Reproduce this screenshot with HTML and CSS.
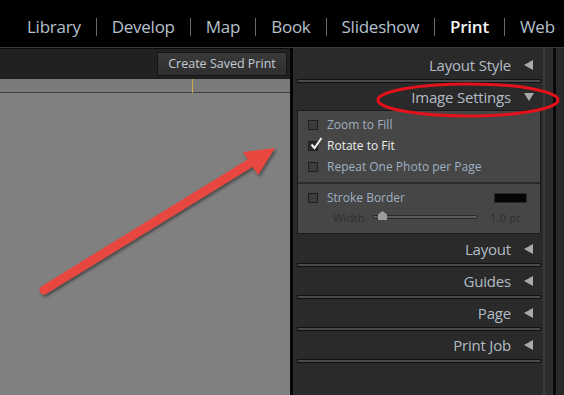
FILE: index.html
```html
<!DOCTYPE html>
<html>
<head>
<meta charset="utf-8">
<link rel="stylesheet" href="styles.css">
</head>
<body>
<div class="app">
  <header class="topbar">
    <nav class="modules">
      <span class="mod">Library</span><span class="sep"></span>
      <span class="mod">Develop</span><span class="sep"></span>
      <span class="mod">Map</span><span class="sep"></span>
      <span class="mod">Book</span><span class="sep"></span>
      <span class="mod">Slideshow</span><span class="sep"></span>
      <span class="mod active">Print</span><span class="sep"></span>
      <span class="mod">Web</span>
    </nav>
  </header>
  <main class="main">
    <section class="left">
      <div class="toolbar"><button class="btn">Create Saved Print</button></div>
      <div class="ruler"><span class="tick"></span></div>
      <div class="canvas"></div>
    </section>
    <div class="divider"></div>
    <aside class="panel">
      <div class="head"><span class="title">Layout Style</span><span class="tri-left"></span></div>
      <div class="bar"></div>
      <div class="head open"><span class="title">Image Settings</span><span class="tri-down"></span></div>
      <div class="box">
        <div class="row"><span class="cb"></span><span class="lbl">Zoom to Fill</span></div>
        <div class="row"><span class="cb checked"><svg class="check" width="13" height="13" viewBox="0 0 13 13"><path d="M1.5 7.5 L4.5 11 L11.5 1" fill="none" stroke="#f2f2f2" stroke-width="2"/></svg></span><span class="lbl on">Rotate to Fit</span></div>
        <div class="row"><span class="cb"></span><span class="lbl">Repeat One Photo per Page</span></div>
        <div class="hr"></div>
        <div class="row"><span class="cb"></span><span class="lbl">Stroke Border</span><span class="swatch"></span></div>
        <div class="row slider-row"><span class="dim wlabel">Width</span><span class="track"><span class="thumb"></span></span><span class="dim val">1.0 pt</span></div>
      </div>
      <div class="head"><span class="title">Layout</span><span class="tri-left"></span></div>
      <div class="bar"></div>
      <div class="head"><span class="title">Guides</span><span class="tri-left"></span></div>
      <div class="bar"></div>
      <div class="head"><span class="title">Page</span><span class="tri-left"></span></div>
      <div class="bar"></div>
      <div class="head"><span class="title">Print Job</span><span class="tri-left"></span></div>
      <div class="bar"></div>
    </aside>
    <div class="scroll"><span class="track-a"></span><span class="track-b"></span><span class="track-c"></span></div>
  </main>
  <svg class="overlay" width="564" height="395" viewBox="0 0 564 395">
    <defs>
      <filter id="sh" x="-10%" y="-10%" width="130%" height="130%">
        <feDropShadow dx="1.5" dy="2" stdDeviation="1.5" flood-color="#000" flood-opacity="0.45"/>
      </filter>
    </defs>
    <g filter="url(#sh)" fill="#e8473f">
      <line x1="44" y1="290" x2="252" y2="162" stroke="#e8473f" stroke-width="9" stroke-linecap="round"/>
      <polygon points="275,148 243,152 258,175"/>
    </g>
    <ellipse cx="468" cy="100" rx="90" ry="16" fill="none" stroke="#e3121b" stroke-width="3"/>
  </svg>
</div>
</body>
</html>
```
FILE: styles.css
```css
* { box-sizing: border-box; }
html, body { margin: 0; padding: 0; background: #000; }
body { width: 564px; height: 395px; overflow: hidden; font-family: "Open Sans", "Noto Sans", sans-serif; }
.app { position: relative; width: 564px; height: 395px; display: flex; flex-direction: column; }

.topbar { height: 48px; background: #000; border-bottom: 1px solid #3a3a3a; display: flex; align-items: flex-end; padding-left: 27px; }
.modules { display: flex; align-items: center; height: 24px; margin-bottom: 8px; }
.mod { font-size: 17px; color: #b5c1cd; letter-spacing: -0.25px; line-height: 24px; }
.mod.active { color: #f4f4f4; font-weight: 600; }
.sep { width: 1px; height: 18px; background: #6a6a6a; margin: 0 15px; }

.main { flex: 1; display: flex; min-height: 0; }
.left { width: 290px; display: flex; flex-direction: column; }
.toolbar { height: 30px; background: #212121; border-top: 1px solid #0c0c0c; display: flex; justify-content: flex-end; align-items: center; padding-right: 3px; }
.btn { height: 24px; width: 130px; background: linear-gradient(#393939, #2e2e2e); border: 1px solid #151515; color: #c3ccd6; font-family: "Open Sans", sans-serif; font-size: 12.5px; padding: 0; }
.ruler { position: relative; height: 15px; background: #7b7b7b; border-top: 1px solid #1a1a1a; border-bottom: 1px solid #3e3e3e; }
.tick { position: absolute; left: 192px; top: 0; width: 1px; height: 14px; background: #c9a94a; }
.canvas { flex: 1; background: #808080; }

.divider { width: 3px; background: #050505; }

.panel { width: 252px; background: #2a2a2a; border-right: 2px solid #3a3a3a; padding: 2px 2px 0 4px; display: flex; flex-direction: column; }
.head { height: 28px; flex: none; display: flex; justify-content: flex-end; align-items: center; padding-right: 8px; gap: 13px; }
.head:first-child { height: 29px; }
.head.open { height: 27px; }
.title { font-size: 15px; color: #b2bcc6; letter-spacing: -0.2px; }
.tri-left { width: 0; height: 0; border-top: 5px solid transparent; border-bottom: 5px solid transparent; border-right: 9px solid #a9a9a9; }
.tri-down { width: 0; height: 0; border-left: 5px solid transparent; border-right: 5px solid transparent; border-top: 8px solid #a9a9a9; margin-right: -1px; }
.bar { height: 4px; flex: none; border: 1px solid #111; background: #4a4a4a; }

.box { height: 124px; flex: none; background: #464646; border: 1px solid #1c1c1c; padding-top: 3px; margin-bottom: 1px; display: flex; flex-direction: column; }
.row { height: 21px; flex: none; display: flex; align-items: center; padding-left: 10px; position: relative; }
.cb { width: 10px; height: 10px; border: 1px solid #1e1e1e; background: #3c3c3c; margin-right: 9px; position: relative; flex: none; }
.cb.checked { background: #2a2a2a; }
.check { position: absolute; left: 1px; top: -5px; }
.lbl { font-size: 12px; color: #9eb0c2; }
.lbl.on { color: #ececec; }
.hr { height: 2px; flex: none; background: #2c2c2c; margin: 5px 0 3px; }
.swatch { position: absolute; right: 13px; width: 33px; height: 10px; background: #050505; border: 1px solid #2a2a2a; }
.slider-row { height: 18px; padding-left: 35px; }
.dim { font-size: 11.5px; color: #2f2f2f; }
.wlabel { width: 39px; }
.track { position: relative; width: 106px; height: 4px; border: 1px solid #2a2a2a; border-radius: 2px; background: #5a5a5a; }
.thumb { position: absolute; left: 5px; top: -5px; width: 9px; height: 9px; background: #9c9c9c; clip-path: polygon(50% 0, 100% 40%, 100% 100%, 0 100%, 0 40%); }
.val { margin-left: 12px; }

.scroll { width: 19px; display: flex; }
.track-a { width: 8px; background: #2d2d2d; }
.track-b { width: 3px; background: #080808; }
.track-c { width: 8px; background: #292929; }

.overlay { position: absolute; left: 0; top: 0; pointer-events: none; }
```
